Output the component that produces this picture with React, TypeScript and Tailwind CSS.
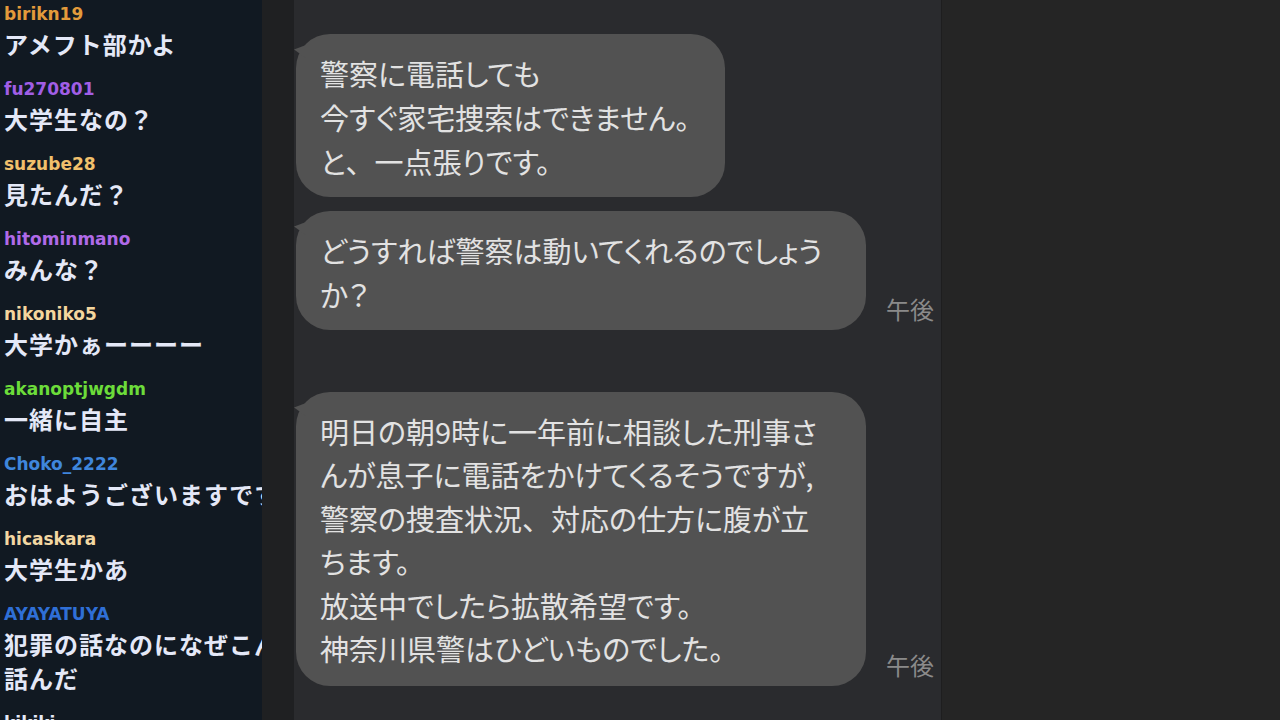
import React from "react";

const chats: { name: string; color: string; lines: string[] }[] = [
  { name: "birikn19", color: "text-[#e39b3b]", lines: ["アメフト部かよ"] },
  { name: "fu270801", color: "text-[#a15ee6]", lines: ["大学生なの？"] },
  { name: "suzube28", color: "text-[#f1c06c]", lines: ["見たんだ？"] },
  { name: "hitominmano", color: "text-[#b06ae8]", lines: ["みんな？"] },
  { name: "nikoniko5", color: "text-[#f4d69e]", lines: ["大学かぁーーーー"] },
  { name: "akanoptjwgdm", color: "text-[#6cdc3a]", lines: ["一緒に自主"] },
  { name: "Choko_2222", color: "text-[#3f86dc]", lines: ["おはようございますです"] },
  { name: "hicaskara", color: "text-[#f3d7a2]", lines: ["大学生かあ"] },
  { name: "AYAYATUYA", color: "text-[#2f6fd6]", lines: ["犯罪の話なのになぜこんな", "話んだ"] },
  { name: "kikiki", color: "text-[#e4e8f7]", lines: ["..."] },
];

function Line({ text }: { text: string }) {
  const parts = text.split("、");
  return (
    <div>
      {parts.map((p, i) => (
        <React.Fragment key={i}>
          {p}
          {i < parts.length - 1 && <span className="[font-feature-settings:normal]">、</span>}
        </React.Fragment>
      ))}
    </div>
  );
}

function Bubble({
  lines,
  width,
  lead,
  pt,
  pb,
}: {
  lines: string[];
  width: string;
  lead: string;
  pt: string;
  pb: string;
}) {
  return (
    <div className={`relative ${width} bg-[#525252] rounded-[34px] pl-[24px] ${pt} ${pb}`}>
      <div className="absolute left-[-2px] top-[11px] w-[12px] h-[13px] bg-[#525252] [clip-path:polygon(0_35%,100%_0,100%_100%)]" />
      <div
        className={`relative text-[29px] ${lead} text-[#e2e2e2] whitespace-nowrap [font-feature-settings:'palt'] font-['Noto_Sans_CJK_JP',sans-serif]`}
      >
        {lines.map((l, i) => (
          <Line key={i} text={l} />
        ))}
      </div>
    </div>
  );
}

export default function App() {
  return (
    <div className="w-[1280px] h-[720px] flex overflow-hidden bg-[#252525]">
      {/* chat column */}
      <div className="w-[262px] h-full bg-[#111922] overflow-hidden pt-[2px] pl-[4px] shrink-0">
        {chats.map((c, i) => (
          <div key={i} className="mb-[16px]">
            <div
              className={`${c.color} text-[17px] leading-[24px] font-bold whitespace-nowrap font-['DejaVu_Sans','Noto_Sans_CJK_JP',sans-serif]`}
            >
              {c.name}
            </div>
            <div className="mt-[1px] text-[#e4e8f7] text-[24px] leading-[34px] font-bold tracking-[1px] whitespace-nowrap font-['Noto_Sans_CJK_JP',sans-serif]">
              {c.lines.map((l, j) => (
                <div key={j}>{l}</div>
              ))}
            </div>
          </div>
        ))}
      </div>

      {/* dark strip */}
      <div className="w-[32px] h-full bg-[#1f2022] shrink-0" />

      {/* conversation */}
      <div className="w-[648px] h-full bg-[#2a2b2e] shrink-0 pl-[2px] pt-[34px] border-r border-[#1e1e1f] flex flex-col">
        <Bubble
          width="w-[429px]"
          lead="leading-[44px]"
          pt="pt-[17px]"
          pb="pb-[14px]"
          lines={["警察に電話しても", "今すぐ家宅捜索はできません。", "と、一点張りです。"]}
        />
        <div className="mt-[14px] flex items-end gap-[20px]">
          <Bubble
            width="w-[570px]"
            lead="leading-[44px]"
            pt="pt-[17px]"
            pb="pb-[14px]"
            lines={["どうすれば警察は動いてくれるのでしょう", "か？"]}
          />
          <span className="mb-[6px] text-[24px] leading-[30px] text-[#8a8a8a] font-['Noto_Sans_CJK_JP',sans-serif] whitespace-nowrap">
            午後
          </span>
        </div>
        <div className="mt-[62px] flex items-end gap-[20px]">
          <Bubble
            width="w-[570px]"
            lead="leading-[43.4px]"
            pt="pt-[18px]"
            pb="pb-[16px]"
            lines={[
              "明日の朝9時に一年前に相談した刑事さ",
              "んが息子に電話をかけてくるそうですが,",
              "警察の捜査状況、対応の仕方に腹が立",
              "ちます。",
              "放送中でしたら拡散希望です。",
              "神奈川県警はひどいものでした。",
            ]}
          />
          <span className="mb-[6px] text-[24px] leading-[30px] text-[#8a8a8a] font-['Noto_Sans_CJK_JP',sans-serif] whitespace-nowrap">
            午後
          </span>
        </div>
      </div>

      {/* right empty */}
      <div className="flex-1 h-full bg-[#252525]" />
    </div>
  );
}
